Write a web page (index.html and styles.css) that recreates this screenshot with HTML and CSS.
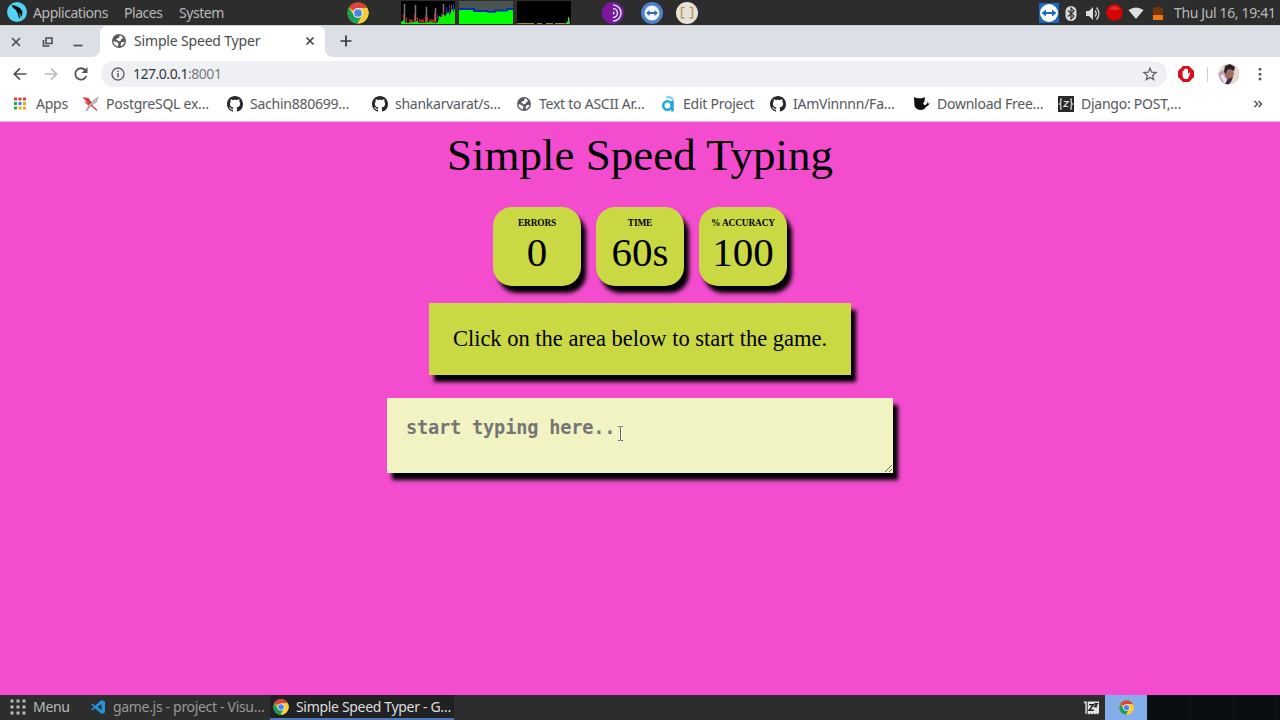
FILE: index.html
```html
<!DOCTYPE html>
<html lang="en">
<head>
    <meta charset="UTF-8">
    <meta name="viewport" content="width=device-width, initial-scale=1.0">
    <title>Simple Speed Typer</title>
    <link rel="stylesheet" href="styles.css">
</head>
<body>
    <!-- Shared icons -->
    <svg class="sprite">
        <symbol id="chrome" viewBox="0 0 24 24">
            <circle cx="12" cy="12" r="11.5" fill="#f2c32e"/>
            <path d="M12 12 2 6.300A11.500 11.500 0 0 1 22 6.300L12 7z" fill="#dc4437"/>
            <path d="M2 6.300A11.500 11.500 0 0 0 11.500 23.500L16.300 14.500 12 12 7.700 14.500z" fill="#1c9d58"/>
            <path d="M12 6.500H22.100A11.500 11.500 0 0 1 11.500 23.500L16.700 14.500z" fill="#f8cd3b"/>
            <circle cx="12" cy="12" r="5.400" fill="#f1f1f1"/>
            <circle cx="12" cy="12" r="4.200" fill="#4a85e8"/>
        </symbol>
        <symbol id="github" viewBox="0 0 16 16">
            <path fill="#24292e" d="M8 0C3.580 0 0 3.580 0 8c0 3.540 2.290 6.530 5.470 7.590.4.070.55-.17.55-.38 0-.19-.01-.82-.01-1.490-2.010.37-2.530-.49-2.690-.94-.09-.23-.48-.94-.82-1.130-.28-.15-.68-.52-.01-.53.63-.01 1.080.58 1.230.82.72 1.210 1.870.87 2.330.66.07-.52.28-.87.51-1.070-1.780-.2-3.640-.89-3.640-3.950 0-.87.31-1.590.82-2.150-.08-.2-.36-1.020.08-2.120 0 0 .67-.21 2.200.82.64-.18 1.320-.27 2-.27s1.360.09 2 .27c1.530-1.040 2.200-.82 2.200-.82.44 1.100.16 1.920.08 2.120.51.56.82 1.270.82 2.150 0 3.070-1.870 3.750-3.650 3.950.29.25.54.73.54 1.480 0 1.070-.01 1.930-.01 2.200 0 .21.15.46.55.38A8.010 8.010 0 0 0 16 8c0-4.420-3.580-8-8-8z"/>
        </symbol>
        <symbol id="globe" viewBox="0 0 16 16">
            <circle cx="8" cy="8" r="7" fill="#575a5e"/>
            <path d="M8.700 2.300 11 3.200 12 5.500 10 6.200 9.700 8 7.300 8.300 6.500 7 4.800 7.200 6.200 5.200 8 5z" fill="#fff"/>
            <path d="M2.200 8.300 5 8.800 7.500 10.200 7.200 12 6.700 13.700Q3 12.500 2.200 8.300zM10.500 9.300 13.700 8.800Q13 12 10.300 13.200L9.500 11.500z" fill="#fff"/>
        </symbol>
    </svg>

    <!-- Desktop top panel -->
    <div class="panel">
        <div class="panel-menus">
            <svg class="logo" viewBox="0 0 20 20"><circle cx="10" cy="10" r="10" fill="#51d3f1"/><path d="M4.500 3 8.500 3.800 13 6 15.500 9.500 15 13.500 14 15 13 11.500 12.300 11.500 13.500 17 11.500 15 10.500 11 8.500 7.500 6 6z" fill="#101010"/></svg>
            <span class="menu-apps">Applications</span>
            <span class="menu-places">Places</span>
            <span class="menu-system">System</span>
        </div>
        <svg class="launcher" viewBox="0 0 24 24"><use href="#chrome"/></svg>
        <div class="graphs">
            <svg viewBox="0 0 54 23"><rect width="54" height="23" fill="#000"/><path d="M3.500 3v18M14.500 4v16M25.500 6v15M34.500 7v14M42.500 3v14" stroke="#777" stroke-width="1.500"/><path d="M2.500 13v9M5.500 16v6M13.500 13v9M16.500 16v6M24.500 14v8M26.500 16v6M33.500 12v10M42.500 11v8M50.500 4v6" stroke="#c82222"/><path d="M8 20h4M18 20h5M28 20h5" stroke="#b02020" stroke-width="3"/><path d="M0 23v-2l3-2 2 3 8-1 3-1 2 2 12-1 4 1 3-1 1-6 2 1 2-3 2 2 3-4 2 2 2-5 2 2 1-4v19z" fill="#0bf000"/><path d="M36.500 14v4M40.500 12v4M45.500 6v7M48.500 4v10M52.500 3v8" stroke="#2331b8"/></svg>
            <svg viewBox="0 0 54 23"><rect width="54" height="23" fill="#4a5450"/><path d="M0 8.500h15v2h13l1 .500h6v-1h13V8.500h6V23H0z" fill="#0f0"/><path d="M0 8h15v2h13l1 .800h7v-1.300h12V8h6" fill="none" stroke="#1027b8" stroke-width="1.800"/></svg>
            <svg viewBox="0 0 54 23"><rect width="54" height="23" fill="#000"/><path d="M0 22.500h17M20 22.500h5M29 22.500h7M38 22.500h10" stroke="#a4911c"/><path d="M48 23l3-3v-4h1l1 7z" fill="#49d837"/></svg>
        </div>
        <div class="dock">
            <svg viewBox="0 0 22 22"><circle cx="11" cy="11" r="11" fill="#69209a"/><path d="M11 0a11 11 0 0 0 0 22z" fill="#7d179d"/><path d="M11 3a8 8 0 0 1 0 16M11 6.500a4.500 4.500 0 0 1 0 9" fill="none" stroke="#e9d9f0" stroke-width="1.500"/><path d="M11 9.500a1.500 1.500 0 0 1 0 3z" fill="#fff"/></svg>
            <svg viewBox="0 0 22 22"><circle cx="11" cy="11" r="11" fill="#4b82cb"/><circle cx="11" cy="11" r="7.500" fill="#f2f5fa"/><path d="M5 11 8.500 8V10h5V8L17 11l-3.500 3V12h-5v2z" fill="#356bb3"/></svg>
            <svg viewBox="0 0 22 22"><circle cx="11" cy="11" r="11" fill="#e6e3dd"/><path d="M8.500 5.500H5.500v10.500h3M13.500 5.500h3v10.500h-3" fill="none" stroke="#c49b57" stroke-width="1.600"/></svg>
        </div>
        <div class="tray">
            <svg viewBox="0 0 22 22"><rect x="1" y="1" width="20" height="20" fill="#1769c1"/><circle cx="11" cy="11" r="9" fill="#fff"/><path d="M3.500 11 8 7.500V10h6V7.500L18.500 11 14 14.500V12H8v2.500z" fill="#1769c1"/></svg>
            <svg viewBox="0 0 22 22"><rect x="5.500" y="4" width="11" height="15" rx="5.500" fill="#dadada"/><path d="M8 8.500l6 5.500-3 3V6l3 3-6 5.500" fill="none" stroke="#333" stroke-width="1.200"/></svg>
            <svg viewBox="0 0 22 22"><path d="M4 9h3l4-4v13l-4-4H4z" fill="#ddd"/><path d="M13 8.500q2.500 3 0 6M14.500 5.500q5 6 0 12" fill="none" stroke="#ccc" stroke-width="1.400"/></svg>
            <svg viewBox="0 0 22 22"><circle cx="10.500" cy="10.500" r="8.300" fill="#d50505"/><path d="M5 7q5.500-6 11 0-5 2-11 0" fill="#df3030"/></svg>
            <svg viewBox="0 0 22 22"><path d="M2.500 8q7.500-5 15 0L10 17z" fill="#ddd"/></svg>
            <svg viewBox="0 0 22 22"><path d="M7 5h6v1h2v12H5V6h2z" fill="#743507"/><path d="M5 13h10v5H5z" fill="#f47612"/></svg>
        </div>
        <span class="clock">Thu Jul 16, 19:41</span>
    </div>

    <!-- Browser window -->
    <div class="tabstrip">
        <div class="window-buttons">
            <svg viewBox="0 0 16 16"><path d="M4 4l8 8M12 4l-8 8" stroke="#4b4f55" stroke-width="1.700"/></svg>
            <svg viewBox="0 0 16 16"><path d="M7 4h6v5.500H7zM4.500 6v6h6" fill="none" stroke="#4b4f55" stroke-width="1.600"/></svg>
            <svg viewBox="0 0 16 16"><path d="M3.500 11.500h9" stroke="#4b4f55" stroke-width="1.700"/></svg>
        </div>
        <div class="tab">
            <svg class="favicon" viewBox="0 0 16 16"><use href="#globe"/></svg>
            <span class="tab-title">Simple Speed Typer</span>
            <svg class="favicon" viewBox="0 0 16 16"><path d="M4.500 4.500l7 7M11.500 4.500l-7 7" stroke="#3c4043" stroke-width="1.600"/></svg>
        </div>
        <div class="tab-rest">
            <svg class="new-tab" viewBox="0 0 16 16"><path d="M8 2.500v11M2.500 8h11" stroke="#33363b" stroke-width="1.700"/></svg>
        </div>
    </div>
    <div class="toolbar">
        <div class="nav-buttons">
            <svg viewBox="0 0 16 16"><path d="M14.500 8H2.500M8 2.300 2.300 8 8 13.700" fill="none" stroke="#505358" stroke-width="1.700"/></svg>
            <svg viewBox="0 0 16 16"><path d="M1.500 8h12M8 2.300 13.700 8 8 13.700" fill="none" stroke="#babcbe" stroke-width="1.700"/></svg>
            <svg viewBox="0 0 16 16"><path d="M13.300 10A5.700 5.700 0 1 1 12.300 4.200" fill="none" stroke="#505358" stroke-width="1.800"/><path d="M14.500 1v6h-6z" fill="#505358"/></svg>
        </div>
        <div class="omnibox">
            <svg viewBox="0 0 16 16"><circle cx="8" cy="8" r="6" fill="none" stroke="#5f6368" stroke-width="1.400"/><path d="M8 7v4.200M8 4.500V6" stroke="#5f6368" stroke-width="1.500"/></svg>
            <span class="url">127.0.0.1<span class="port">:8001</span></span>
            <svg viewBox="0 0 16 16"><path d="M8 2.200l1.700 4 4.300.4-3.300 2.800 1 4.200L8 11.400l-3.700 2.200 1-4.200L2 6.600l4.300-.4z" fill="none" stroke="#5f6368" stroke-width="1.300"/></svg>
        </div>
        <svg class="blocker" viewBox="0 0 16 16"><path d="M5 0h6l5 5v6l-5 5H5l-5-5V5z" fill="#d5101d"/><path d="M4.500 8V5h1.300v2.500V3.200h1.400v4V2.500h1.400v4.700V3.200H10v5l1.300-1.700 1 .5-2.200 5.200L9 13H6.500L5 11.500z" fill="#fff"/></svg>
        <span class="divider"></span>
        <svg class="avatar" viewBox="0 0 22 22">
            <clipPath id="face"><circle cx="11" cy="11" r="10.500"/></clipPath>
            <g clip-path="url(#face)"><rect width="22" height="22" fill="#e6d8cc"/><path d="M0 10 7 6l4 12-3 4H0z" fill="#b9a1b3"/><path d="M7 6q4-4 8 0l1 5-2 5-4 2-3-5z" fill="#a26c60"/><path d="M6 9 7 3l5-2 5 3-1 4-4-2-3 1-1 4z" fill="#25202c"/><path d="M10 16l5-2-2 5-3 3H6z" fill="#392a3e"/><path d="M2 13l3-2 4 6-2 4z" fill="#e9dff0"/></g>
        </svg>
        <svg class="dots" viewBox="0 0 4 16"><path d="M.700 2h2.600v2.500H.700zM.700 6.900h2.600v2.500H.700zM.700 11.800h2.600v2.500H.700z" fill="#54575c"/></svg>
    </div>
    <div class="bookmarks">
        <div class="bookmark"><svg viewBox="0 0 16 16"><path d="M2 1.500h3v3H2zM6.500 1.500h3v3h-3zM11 1.500h3v3h-3z" fill="#d94336"/><path d="M2 6h3v3H2z" fill="#30a155"/><path d="M6.500 6h3v3h-3z" fill="#3483d8"/><path d="M11 6h3v3h-3z" fill="#e6ab2c"/><path d="M2 10.500h3v3H2z" fill="#30a155"/><path d="M6.500 10.500h3v3h-3zM11 10.500h3v3h-3z" fill="#e6ab2c"/></svg><span>Apps</span></div>
        <div class="bookmark"><svg viewBox="0 0 16 16"><path d="M3 15 7 8 11 4.500 14.500 2 13 6 9 8.500z" fill="#ddd" stroke="#aaa" stroke-width="1.200"/><path d="M1 2l4 .500 3 4-2 1zM2 6l4 3M8 9l6 5.500" fill="#d52c36" stroke="#dc3c45" stroke-width="1.300"/></svg><span>PostgreSQL ex…</span></div>
        <div class="bookmark"><svg viewBox="0 0 16 16"><use href="#github"/></svg><span>Sachin880699…</span></div>
        <div class="bookmark"><svg viewBox="0 0 16 16"><use href="#github"/></svg><span>shankarvarat/s…</span></div>
        <div class="bookmark"><svg viewBox="0 0 16 16"><use href="#globe"/></svg><span>Text to ASCII Ar…</span></div>
        <div class="bookmark"><svg viewBox="0 0 16 16"><circle cx="7.500" cy="9.500" r="4.200" fill="none" stroke="#22a7df" stroke-width="2.600"/><path d="M12.500 5v10.500" stroke="#22a7df" stroke-width="2.600"/><path d="M6 1.800q5-2 7.500 3" fill="none" stroke="#8ad0ea" stroke-width="2.200"/></svg><span>Edit Project</span></div>
        <div class="bookmark"><svg viewBox="0 0 16 16"><use href="#github"/></svg><span>IAmVinnnn/Fa…</span></div>
        <div class="bookmark"><svg viewBox="0 0 16 16"><path d="M0 1l3 1.200h5L11 1l-.500 4.500L9 7.500l2 2 2-2 .500-2 .5 2.500L16 6q-.5 3-4 5-1.500 3-5.500 3T.500 10z" fill="#111"/></svg><span>Download Free…</span></div>
        <div class="bookmark"><svg viewBox="0 0 16 16"><rect width="16" height="16" fill="#292929"/><path d="M4 3H2.800v4L1.500 8l1.300 1v4H4M12 3h1.200v4l1.300 1-1.300 1v4H12M5.800 5.500h4.400L6 10.500h4.400" fill="none" stroke="#ddd" stroke-width="1.200"/></svg><span>Django: POST,…</span></div>
        <svg class="more" viewBox="0 0 10 10"><path d="M1.500 2 4.500 5l-3 3M5.500 2 8.500 5l-3 3" fill="none" stroke="#505358" stroke-width="1.500"/></svg>
    </div>

    <!-- Typing game -->
    <div class="game">
        <div class="heading">Simple Speed Typing</div>
        <div class="header">
            <div class="stat">
                <div class="header-text">Errors</div>
                <div class="curr-value">0</div>
            </div>
            <div class="stat">
                <div class="header-text">Time</div>
                <div class="curr-value">60s</div>
            </div>
            <div class="stat">
                <div class="header-text">% Accuracy</div>
                <div class="curr-value">100</div>
            </div>
        </div>
        <div class="quote">Click on the area below to start the game.</div>
        <div class="typing">
            <textarea class="input-area" placeholder="start typing here.."></textarea>
            <svg class="cursor" viewBox="0 0 7 17"><path d="M1 1.500h2l.5.500.5-.500h2M3.500 2v13M1 15.500h2l.5-.500.5.500h2" fill="none" stroke="#fff" stroke-width="2.200"/><path d="M1 1.500h2l.5.500.5-.500h2M3.500 2v13M1 15.500h2l.5-.500.5.500h2" fill="none" stroke="#666"/></svg>
        </div>
    </div>

    <!-- Desktop taskbar -->
    <div class="taskbar">
        <div class="task task-menu">
            <svg viewBox="0 0 16 16"><path d="M.500.500h3v3h-3zM6.500.500h3v3h-3zM12.500.500h3v3h-3zM.500 6.500h3v3h-3zM6.500 6.500h3v3h-3zM12.500 6.500h3v3h-3zM.500 12.500h3v3h-3zM6.500 12.500h3v3h-3zM12.500 12.500h3v3h-3z" fill="#b9b9b9"/></svg>
            <span>Menu</span>
        </div>
        <div class="task task-code">
            <svg viewBox="0 0 16 16"><path d="M11.500 1 15 2.500v11L11.500 15 5 9.300 2.200 11.500 1 10.800 3.800 8 1 5.200l1.200-.700L5 6.700zM11.500 5 7.500 8l4 3z" fill="#2492d8" fill-rule="evenodd"/></svg>
            <span>game.js - project - Visu…</span>
        </div>
        <div class="task task-active">
            <svg viewBox="0 0 24 24"><use href="#chrome"/></svg>
            <span>Simple Speed Typer - G…</span>
        </div>
        <svg class="sleep" viewBox="0 0 18 16"><path d="M1 1h3v13H2.500V3H1z" fill="#e3e3e3"/><path d="M5 1h12v11.500l-1 2h-1l-1-1-1 1h-1l-1-1-1 1H9l-1-1-1 1H5z" fill="#e3e3e3"/><path d="M6.500 4.500h4.500l-4.500 6H11.500M12 3.500h3l-2.500 3H15" fill="none" stroke="#222" stroke-width="1.600"/></svg>
        <div class="workspaces">
            <div class="workspace current"><svg viewBox="0 0 24 24"><use href="#chrome"/></svg></div>
            <div class="workspace"></div>
            <div class="workspace"></div>
            <div class="workspace"></div>
        </div>
    </div>
</body>
</html>
```
FILE: styles.css
```css
* {
    box-sizing: border-box;
}

body {
    margin: 0;
    height: 720px;
    overflow: hidden;
    display: flex;
    flex-direction: column;
    font-family: "Noto Sans", sans-serif;
    font-size: 14px;
    line-height: 18px;
    background: #f44ccf;
}

svg {
    display: block;
    flex: none;
}

.sprite {
    position: absolute;
    width: 0;
    height: 0;
}

span {
    white-space: nowrap;
}

/* Top panel */
.panel {
    display: grid;
    grid-template-columns: 347px 53px 202px 436px 132px 1fr;
    align-items: center;
    height: 25px;
    flex: none;
    background: #2d2d2d;
    color: #b9b9b9;
    letter-spacing: -0.45px;
}

.panel-menus {
    display: grid;
    grid-template-columns: 26px 91px 55px 1fr;
    padding-left: 7px;
    align-items: center;
}

.logo {
    width: 20px;
    height: 20px;
    margin-top: -1px;
}

.launcher {
    width: 22px;
    height: 22px;
}

.graphs {
    display: flex;
    gap: 4px;
    padding-left: 1px;
}

.graphs svg {
    width: 54px;
    height: 23px;
}

.dock {
    display: flex;
    gap: 17px;
}

.dock svg {
    width: 22px;
    height: 22px;
}

.dock svg:last-child {
    margin-left: -4px;
}

.tray {
    display: flex;
}

.tray svg {
    width: 22px;
    height: 22px;
}

.clock {
    padding-left: 4px;
    letter-spacing: -0.36px;
}

/* Tab strip */
.tabstrip {
    display: flex;
    height: 32px;
    flex: none;
    background: #fff;
    border-top: 1px solid #d0d0d0;
}

.window-buttons {
    display: flex;
    align-items: center;
    gap: 15px;
    width: 100px;
    height: 31px;
    padding-left: 8px;
    background: #dcdfe6;
    border-bottom-right-radius: 8px;
}

.window-buttons svg,
.favicon,
.new-tab {
    width: 16px;
    height: 16px;
}

.tab {
    display: flex;
    align-items: center;
    width: 225px;
    height: 31px;
    padding: 0 7px 1px 11px;
    background: radial-gradient(circle at 8px 8px, #fff 8px, #dcdfe6 8.5px) 0 0 / 8px 8px no-repeat,
        radial-gradient(circle at 0 8px, #fff 8px, #dcdfe6 8.5px) 100% 0 / 8px 8px no-repeat,
        #fff;
}

.tab-title {
    flex: 1;
    padding-left: 7px;
    color: #494c50;
    letter-spacing: -0.17px;
}

.tab-rest {
    display: flex;
    align-items: center;
    flex: 1;
    padding: 0 0 1px 13px;
    background: #dcdfe6;
    border-bottom-left-radius: 8px;
}

/* Toolbar */
.toolbar {
    display: flex;
    align-items: center;
    height: 34px;
    flex: none;
    padding: 0 18px 0 12px;
    background: #fff;
}

.nav-buttons {
    display: flex;
    gap: 14.5px;
    width: 89px;
}

.nav-buttons svg {
    width: 16px;
    height: 16px;
}

.omnibox {
    display: flex;
    align-items: center;
    width: 1067px;
    height: 26px;
    padding: 0 9px 0 9px;
    border-radius: 13px;
    background: #eff0f4;
}

.omnibox svg {
    width: 16px;
    height: 16px;
}

.url {
    flex: 1;
    padding-left: 7px;
    color: #333639;
    letter-spacing: -0.47px;
}

.port {
    color: #777a7e;
}

.blocker {
    width: 16px;
    height: 16px;
    margin-left: 11px;
}

.divider {
    width: 1px;
    height: 15px;
    margin: 0 10px 0 13px;
    background: #cfd1d4;
}

.avatar {
    width: 22px;
    height: 22px;
}

.dots {
    width: 4px;
    height: 16px;
    margin-left: 18px;
}

/* Bookmarks bar */
.bookmarks {
    display: grid;
    grid-template-columns: 71px 144px 145px 144px 144px 110px 144px 144px 195px 10px;
    align-items: center;
    height: 31px;
    flex: none;
    padding: 0 0 5px 12px;
    background: #fff;
    border-bottom: 1px solid #fbb3e8;
}

.bookmark {
    display: flex;
    align-items: center;
    gap: 7px;
    color: #55585c;
    letter-spacing: -0.25px;
}

.bookmark:first-child {
    gap: 8px;
}

.bookmark svg {
    width: 16px;
    height: 16px;
}

.more {
    width: 10px;
    height: 10px;
}

/* Game */
.game {
    flex: 1;
    display: flex;
    flex-direction: column;
    align-items: center;
    font-family: "Liberation Serif", serif;
    color: #000;
    background: #f44ccf;
}

.heading {
    margin-top: 7px;
    font-size: 45px;
    line-height: 52px;
}

.header {
    display: flex;
    gap: 15px;
    margin-top: 26px;
}

.stat {
    width: 88px;
    height: 79px;
    padding-top: 11px;
    text-align: center;
    border-radius: 19px;
    background: #c9d843;
    box-shadow: 5px 7px 4px #000;
}

.header-text {
    font-size: 9.4px;
    line-height: 11px;
    font-weight: bold;
    letter-spacing: -0.15px;
    text-transform: uppercase;
}

.curr-value {
    font-size: 41px;
    line-height: 46px;
}

.quote {
    width: 422px;
    margin-top: 17px;
    font-size: 22.5px;
    line-height: 72px;
    text-align: center;
    background: #c9d843;
    box-shadow: 5px 7px 4px #000;
}

.typing {
    position: relative;
    width: 506px;
    height: 75px;
    margin-top: 23px;
}

.input-area {
    display: block;
    width: 506px;
    height: 75px;
    margin: 0;
    padding: 19px;
    border: none;
    outline: none;
    font-family: "DejaVu Sans Mono", monospace;
    font-size: 18.6px;
    letter-spacing: -0.18px;
    font-weight: bold;
    background: #f1f3c2;
    box-shadow: 5px 7px 4px #000;
}

.input-area::placeholder {
    color: #757575;
}

.cursor {
    position: absolute;
    left: 230px;
    top: 27px;
    width: 7px;
    height: 17px;
}

/* Taskbar */
.taskbar {
    display: flex;
    align-items: center;
    height: 25px;
    flex: none;
    background: #2d2d2d;
    color: #b9b9b9;
    letter-spacing: -0.32px;
}

.task {
    display: flex;
    align-items: center;
    height: 25px;
    gap: 7px;
    padding-bottom: 2px;
}

.task svg {
    width: 16px;
    height: 16px;
}

.task-menu {
    width: 90px;
    padding-left: 10px;
}

.task-code {
    width: 180px;
    color: #999;
}

.task-active {
    width: 184px;
    padding: 0 0 0 3px;
    color: #ddd;
    background: #202123;
    border-bottom: 2px solid #4f79b9;
}

.sleep {
    width: 17px;
    height: 16px;
    margin-left: 629px;
}

.workspaces {
    display: flex;
    flex: 1;
    margin-left: 5px;
    background: #0a0d12;
}

.workspace {
    display: flex;
    align-items: center;
    justify-content: center;
    width: 43px;
    height: 25px;
    border-right: 1px solid #12151a;
}

.workspace svg {
    width: 15px;
    height: 15px;
}

.current {
    background: #83aee9;
}
```
